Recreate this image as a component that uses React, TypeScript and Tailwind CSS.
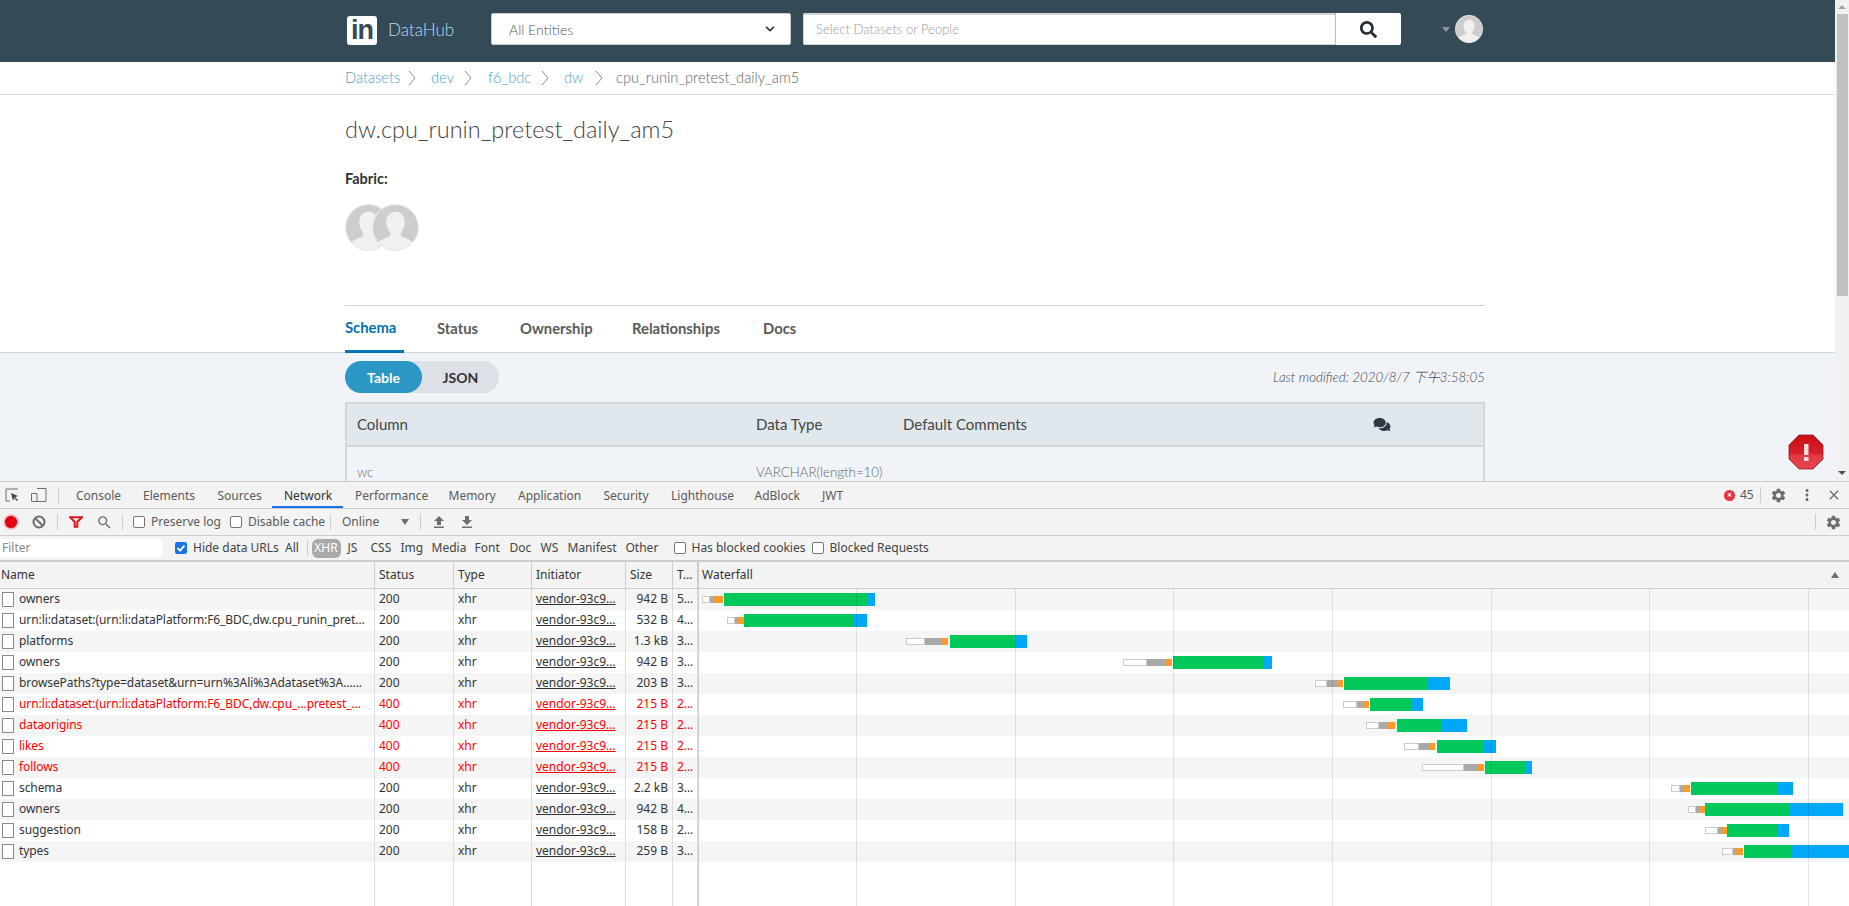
import { FaChevronDown, FaComments, FaSearch } from "react-icons/fa";
import { MdClose, MdMoreVert, MdSearch, MdSettings } from "react-icons/md";

type Req = {
  name: string;
  status: number;
  size: string;
  time: string;
  // page x of: queue start, gray start, orange start, orange end, green start, blue start, blue end
  bars: number[];
};

const WF_LEFT = 699;
const GRID_LINES = [856, 1015, 1173, 1332, 1491, 1649, 1808];

const REQUESTS: Req[] = [
  { name: "owners", status: 200, size: "942 B", time: "5…", bars: [702, 710, 714, 723, 724, 867, 875] },
  { name: "urn:li:dataset:(urn:li:dataPlatform:F6_BDC,dw.cpu_runin_pret…", status: 200, size: "532 B", time: "4…", bars: [727, 735, 738, 744, 744, 854, 867] },
  { name: "platforms", status: 200, size: "1.3 kB", time: "3…", bars: [906, 925, 942, 948, 950, 1016, 1027] },
  { name: "owners", status: 200, size: "942 B", time: "3…", bars: [1123, 1147, 1165, 1172, 1173, 1264, 1272] },
  { name: "browsePaths?type=dataset&urn=urn%3Ali%3Adataset%3A……", status: 200, size: "203 B", time: "3…", bars: [1315, 1327, 1338, 1343, 1344, 1428, 1450] },
  { name: "urn:li:dataset:(urn:li:dataPlatform:F6_BDC,dw.cpu_…pretest_…", status: 400, size: "215 B", time: "2…", bars: [1343, 1357, 1364, 1369, 1370, 1411, 1423] },
  { name: "dataorigins", status: 400, size: "215 B", time: "2…", bars: [1366, 1379, 1388, 1395, 1397, 1441, 1467] },
  { name: "likes", status: 400, size: "215 B", time: "2…", bars: [1404, 1419, 1430, 1435, 1437, 1484, 1496] },
  { name: "follows", status: 400, size: "215 B", time: "2…", bars: [1422, 1464, 1478, 1484, 1485, 1525, 1532] },
  { name: "schema", status: 200, size: "2.2 kB", time: "3…", bars: [1671, 1680, 1684, 1690, 1691, 1777, 1793] },
  { name: "owners", status: 200, size: "942 B", time: "4…", bars: [1688, 1696, 1699, 1705, 1705, 1790, 1843] },
  { name: "suggestion", status: 200, size: "158 B", time: "2…", bars: [1705, 1718, 1721, 1727, 1727, 1777, 1789] },
  { name: "types", status: 200, size: "259 B", time: "3…", bars: [1722, 1733, 1736, 1743, 1744, 1791, 1860] },
];

const COLS = "grid grid-cols-[375px_79px_78px_94px_47px_25px_1fr]";
const CELL = "border-r border-[#dcdcdc] pl-[4px] pr-[4px] overflow-hidden whitespace-nowrap";

function Avatar({ className }: { className?: string }) {
  return (
    <svg viewBox="0 0 48 48" className={className}>
      <defs>
        <clipPath id="avatar-clip">
          <circle cx="24" cy="24" r="23" />
        </clipPath>
      </defs>
      <circle cx="24" cy="24" r="23.5" fill="#fff" stroke="#e6e6e6" />
      <g clipPath="url(#avatar-clip)">
        <rect width="48" height="48" fill="#cdcdcd" />
        <path
          d="M24 8c-6 0-9.500 4.500-9.500 10.500 0 4.500 1.800 8 4 10.500v3.500c-2.500 2-9 3.500-11.500 6-1.500 1.500-1.500 5-1.500 9.500h37c0-4.500 0-8-1.500-9.500-2.500-2.500-9-4-11.500-6V29c2.200-2.500 4-6 4-10.500C33.500 12.500 30 8 24 8z"
          fill="#f0f0f0"
        />
      </g>
    </svg>
  );
}

function Crumb({ children }: { children: React.ReactNode }) {
  return <span className="text-[#4b9fcb]">{children}</span>;
}

function CrumbArrow({ className }: { className: string }) {
  return (
    <svg viewBox="0 0 8 16" className={`h-[16px] w-[8px] shrink-0 ${className}`} fill="none" stroke="#8a8a8a" strokeWidth="1">
      <path d="M1 1l6 7-6 7" />
    </svg>
  );
}

function TopBar() {
  return (
    <header className="flex h-[62px] items-center bg-[#344a57] pl-[347px]">
      <div className="mb-[2px] flex h-[29px] w-[30px] items-end justify-center rounded-[3px] bg-white font-['Liberation_Sans',sans-serif] text-[27px] leading-[29px] font-bold tracking-[-1px] text-[#344a57]">
        in
      </div>
      <span className="mb-[2px] ml-[11px] w-[103px] text-[17px] font-light text-[#b9dcf2]">DataHub</span>
      <div className="mb-[4px] flex h-[32px] w-[300px] items-center justify-between rounded-[2px] border border-[#c9c9c9] bg-white pr-[15px] pl-[17px] text-[14px] font-light text-[#555]">
        All Entities
        <FaChevronDown className="h-[10px] w-[10px] text-[#333]" />
      </div>
      <div className="mb-[4px] ml-[12px] flex h-[32px] w-[532px] items-center rounded-l-[2px] border-t-2 border-b border-l border-[#d4d4d4] bg-white pl-[12px] text-[13px] font-light text-[#9b9b9b]">
        Select Datasets or People
      </div>
      <div className="mb-[4px] flex h-[32px] w-[66px] items-center justify-center rounded-r-[2px] border-l border-[#bdbdbd] bg-white">
        <FaSearch className="h-[17px] w-[17px] text-[#222d35]" />
      </div>
      <span className="mb-[4px] ml-[41px] h-0 w-0 border-x-[4px] border-t-[5px] border-x-transparent border-t-[#8b979e]" />
      <Avatar className="mb-[4px] ml-[5px] h-[28px] w-[28px]" />
    </header>
  );
}

function PageBody() {
  return (
    <main className="relative min-w-0 flex-1 overflow-hidden bg-white font-['Lato','Noto_Sans_CJK_SC',sans-serif]">
      <TopBar />
      <nav className="flex h-[33px] items-center border-b border-[#dcdcdc] pb-[1px] pl-[345px] text-[14.700px] font-light">
        <span className="w-[63px]"><Crumb>Datasets</Crumb></span>
        <CrumbArrow className="mr-[15px]" />
        <span className="w-[33px]"><Crumb>dev</Crumb></span>
        <CrumbArrow className="mr-[16px]" />
        <span className="w-[53px]"><Crumb>f6_bdc</Crumb></span>
        <CrumbArrow className="mr-[15px]" />
        <span className="w-[31px]"><Crumb>dw</Crumb></span>
        <CrumbArrow className="mr-[13px]" />
        <span className="text-[#666]">cpu_runin_pretest_daily_am5</span>
      </nav>

      <div className="ml-[345px] w-[1140px]">
        <h1 className="mt-[20px] h-[29px] text-[23.500px] leading-[29px] font-light text-[#444]">dw.cpu_runin_pretest_daily_am5</h1>
        <div className="mt-[25px] h-[20px] text-[14.500px] leading-[20px] font-bold text-[#333]">Fabric:</div>
        <div className="mt-[15px] flex h-[47px]">
          <Avatar className="h-[47px] w-[47px]" />
          <Avatar className="-ml-[20px] h-[47px] w-[47px]" />
        </div>
        <div className="mt-[54px] flex h-[47px] items-center border-t border-[#d0d0d0] pb-[2px] text-[14.800px] font-bold text-[#5a5a5a]">
          <span className="-mb-[2px] flex h-[48px] w-[59px] items-center border-b-[3px] border-[#0073b1] pb-[1px] text-[#0073b1]">Schema</span>
          <span className="ml-[33px] w-[83px]">Status</span>
          <span className="w-[112px]">Ownership</span>
          <span className="w-[131px]">Relationships</span>
          <span>Docs</span>
        </div>
      </div>

      <section className="h-[200px] border-t border-[#cfd6dc] bg-[#f0f4f8]">
        <div className="ml-[345px] w-[1140px]">
          <div className="flex items-center justify-between pt-[8px]">
            <div className="flex h-[32px] w-[154px] rounded-full bg-[#dde1e7] text-[14px] font-bold">
              <span className="flex w-[77px] items-center justify-center rounded-full bg-[#2a97c5] text-white">Table</span>
              <span className="flex w-[77px] items-center justify-center text-[#333]">JSON</span>
            </div>
            <span className="text-[13.400px] font-light text-[#444] italic">Last modified: 2020/8/7 下午3:58:05</span>
          </div>
          <div className="mt-[9px] border-x-2 border-t-2 border-[#cfd6dc]">
            <div className="flex h-[43px] items-center border-b-2 border-[#cfd6dc] bg-[#e0e8ee] pl-[10px] text-[15px] text-[#444]">
              <span className="w-[399px]">Column</span>
              <span className="w-[147px]">Data Type</span>
              <span className="w-[470px]">Default Comments</span>
              <FaComments className="h-[15px] w-[18px] text-[#2e3a42]" />
            </div>
            <div className="flex h-[60px] pt-[16px] pl-[10px] text-[13.300px] font-light text-[#666]">
              <span className="w-[399px]">wc</span>
              <span>VARCHAR(length=10)</span>
            </div>
          </div>
        </div>
      </section>

      <svg viewBox="0 0 36 36" className="absolute top-[434px] right-[11px] h-[36px] w-[36px]">
        <defs>
          <linearGradient id="sign-red" x1="0" y1="0" x2="0" y2="1">
            <stop offset="0" stopColor="#c90d15" />
            <stop offset="0.55" stopColor="#d9202b" />
            <stop offset="0.6" stopColor="#e23a44" />
            <stop offset="1" stopColor="#e5454e" />
          </linearGradient>
        </defs>
        <path d="M11 1h14l10 10v14L25 35H11L1 25V11z" fill="url(#sign-red)" stroke="#8e1a20" strokeWidth="0.8" />
        <rect x="16" y="10" width="4.500" height="11" fill="#fbdadb" />
        <rect x="16" y="23" width="4.500" height="4" fill="#fbdadb" />
      </svg>
    </main>
  );
}

function PageScrollbar() {
  return (
    <div className="flex w-[14px] flex-col items-center bg-[#f1f1f1]">
      <span className="mt-[5px] h-0 w-0 border-x-[4px] border-b-[4px] border-x-transparent border-b-[#a3a3a3]" />
      <div className="mt-[5px] h-[282px] w-[11px] bg-[#c1c1c1]" />
      <span className="mt-auto mb-[6px] h-0 w-0 border-x-[4px] border-t-[4px] border-x-transparent border-t-[#505050]" />
    </div>
  );
}

function Sep({ className }: { className: string }) {
  return <span className={`h-[16px] w-px shrink-0 bg-[#ccc] ${className}`} />;
}

function Box({ className = "" }: { className?: string }) {
  return <span className={`block h-[12px] w-[12px] shrink-0 rounded-[2px] border border-[#767676] bg-white ${className}`} />;
}

function TabsRow() {
  return (
    <div className="flex h-[27px] items-center border-b border-[#ccc] text-[12px] text-[#5a5a5a]">
      <svg viewBox="0 0 14 14" className="ml-[5px] h-[14px] w-[14px]" fill="none">
        <path d="M13 1H1v12h4" stroke="#6e6e6e" />
        <path d="M6 5l7 3-3 1.200L13 12l-1 1-3-3-1 3z" fill="#444" />
      </svg>
      <svg viewBox="0 0 16 14" className="ml-[12px] h-[14px] w-[16px]" fill="none" stroke="#6e6e6e">
        <path d="M6 .5h9v13H6" />
        <path d="M.5 5.500h5.500v8H.5z" />
      </svg>
      <Sep className="ml-[11px]" />
      <div className="ml-[5px] flex h-full">
        <span className="flex w-[67px] items-center pt-[1px] pl-[12px]">Console</span>
        <span className="flex w-[74.500px] items-center pt-[1px] pl-[12px]">Elements</span>
        <span className="flex w-[66.500px] items-center pt-[1px] pl-[12px]">Sources</span>
        <span className="flex w-[71px] items-center border-b-2 border-[#1a73e8] pt-[3px] pl-[12px] text-[#333]">Network</span>
        <span className="flex w-[93.500px] items-center pt-[1px] pl-[12px]">Performance</span>
        <span className="flex w-[69.500px] items-center pt-[1px] pl-[12px]">Memory</span>
        <span className="flex w-[85.500px] items-center pt-[1px] pl-[12px]">Application</span>
        <span className="flex w-[67.500px] items-center pt-[1px] pl-[12px]">Security</span>
        <span className="flex w-[83.500px] items-center pt-[1px] pl-[12px]">Lighthouse</span>
        <span className="flex w-[67.500px] items-center pt-[1px] pl-[12px]">AdBlock</span>
        <span className="flex items-center pt-[1px] pl-[12px]">JWT</span>
      </div>
      <span className="ml-auto flex h-[11px] w-[11px] items-center justify-center rounded-full bg-[#ea3342] text-[8px] leading-none font-bold text-white">×</span>
      <span className="ml-[5px] w-[20px]">45</span>
      <Sep className="" />
      <MdSettings className="ml-[9px] h-[17px] w-[17px] text-[#6e6e6e]" />
      <MdMoreVert className="ml-[11px] h-[18px] w-[18px] text-[#6e6e6e]" />
      <MdClose className="mr-[7px] ml-[10px] h-[16px] w-[16px] text-[#6e6e6e]" />
    </div>
  );
}

function ToolbarRow() {
  return (
    <div className="flex h-[27px] items-center border-b border-[#ccc] text-[12px] text-[#5a5a5a]">
      <span className="ml-[5px] h-[12px] w-[12px] rounded-full bg-[#e60012] shadow-[0_0_3px_#e60012]" />
      <svg viewBox="0 0 14 14" className="ml-[15px] h-[14px] w-[14px]" fill="none" stroke="#6e6e6e" strokeWidth="2">
        <circle cx="7" cy="7" r="5.500" />
        <path d="M3 3l8 8" />
      </svg>
      <Sep className="ml-[11px]" />
      <svg viewBox="0 0 14 12" className="ml-[11px] h-[12px] w-[14px]" fill="none" stroke="#e2141b" strokeWidth="2">
        <path d="M1 1.200h12L8.300 6v4.800H5.700V6z" />
      </svg>
      <MdSearch className="ml-[13px] h-[17px] w-[17px] text-[#6e6e6e]" />
      <Sep className="ml-[9px]" />
      <Box className="ml-[10px]" />
      <span className="ml-[6px] w-[79px]">Preserve log</span>
      <Box />
      <span className="ml-[6px] w-[82px]">Disable cache</span>
      <Sep className="" />
      <span className="ml-[11px] w-[59px]">Online</span>
      <span className="h-0 w-0 border-x-[4px] border-t-[6px] border-x-transparent border-t-[#6e6e6e]" />
      <Sep className="ml-[11px]" />
      <svg viewBox="0 0 12 12" className="ml-[12px] h-[12px] w-[12px]" fill="#6e6e6e">
        <path d="M6 0l5 5H8v4H4V5H1zM1 10.500h10V12H1z" />
      </svg>
      <svg viewBox="0 0 12 12" className="ml-[16px] h-[12px] w-[12px]" fill="#6e6e6e">
        <path d="M4 0h4v4h3L6 9 1 4h3zM1 10.500h10V12H1z" />
      </svg>
      <Sep className="ml-auto" />
      <MdSettings className="mr-[7px] ml-[9px] h-[17px] w-[17px] text-[#6e6e6e]" />
    </div>
  );
}

function FilterRow() {
  return (
    <div className="flex h-[26px] items-center border-b-2 border-[#ccc] text-[12px] text-[#444]">
      <div className="flex h-[18px] w-[162px] items-center bg-white pl-[2px] text-[#8a8a8a]">Filter</div>
      <span className="ml-[13px] flex h-[12px] w-[12px] items-center justify-center rounded-[2px] bg-[#1a73e8]">
        <svg viewBox="0 0 12 12" className="h-[12px] w-[12px]" fill="none" stroke="#fff" strokeWidth="1.800">
          <path d="M2.500 6.200l2.500 2.500 4.500-5" />
        </svg>
      </span>
      <span className="ml-[6px] w-[92px]">Hide data URLs</span>
      <span className="w-[21.500px]">All</span>
      <Sep className="" />
      <span className="ml-[4px] flex h-[19px] w-[29px] items-center justify-center rounded-[6px] bg-[#a9a9a9] text-white">XHR</span>
      <span className="ml-[7px] w-[23px]">JS</span>
      <span className="w-[30px]">CSS</span>
      <span className="w-[31px]">Img</span>
      <span className="w-[43px]">Media</span>
      <span className="w-[35px]">Font</span>
      <span className="w-[31px]">Doc</span>
      <span className="w-[27px]">WS</span>
      <span className="w-[58px]">Manifest</span>
      <span className="w-[48px]">Other</span>
      <Box />
      <span className="ml-[6px] w-[120px]">Has blocked cookies</span>
      <Box />
      <span className="ml-[6px]">Blocked Requests</span>
    </div>
  );
}

function Bars({ bars }: { bars: number[] }) {
  const [q, g, o, oEnd, gr, b, bEnd] = bars;
  const seg = (from: number, to: number, cls: string) => (
    <span
      className={`absolute ${cls}`}
      style={{ left: from - WF_LEFT, width: to - from }}
    />
  );
  return (
    <>
      {seg(q, g, "top-[7px] h-[7px] border border-[#ccc] bg-white")}
      {seg(g, o, "top-[7px] h-[7px] bg-[#a9a9a9]")}
      {seg(o, oEnd, "top-[7px] h-[7px] bg-[#ff9a29]")}
      {seg(gr, b, "top-[4px] h-[13px] bg-[#00c85b]")}
      {seg(b, bEnd, "top-[4px] h-[13px] bg-[#00a8f7]")}
    </>
  );
}

function RequestRow({ req, index }: { req: Req; index: number }) {
  const failed = req.status >= 400;
  return (
    <div
      className={`${COLS} h-[21px] leading-[20px] ${index % 2 === 0 ? "bg-[#f5f5f5]" : "bg-white"} ${failed ? "text-[#f00]" : "text-[#333]"}`}
    >
      <div className={`${CELL} flex items-center !pl-[2px]`}>
        <span className="h-[15px] w-[12px] shrink-0 border border-[#8a8a8a] bg-white" />
        <span className="mb-[1px] ml-[5px] tracking-[-0.08px]">{req.name}</span>
      </div>
      <div className={CELL}>{req.status}</div>
      <div className={CELL}>xhr</div>
      <div className={`${CELL} underline`}>vendor-93c9…</div>
      <div className={`${CELL} text-right`}>{req.size}</div>
      <div className={CELL}>{req.time}</div>
      <div className="relative overflow-hidden border-l border-[#ccc]">
        <Bars bars={req.bars} />
      </div>
    </div>
  );
}

function NetworkTable() {
  return (
    <div className="flex min-h-0 flex-1 flex-col overflow-hidden bg-white">
      <div className={`${COLS} h-[27px] shrink-0 border-b border-[#ccc] bg-[#f3f3f3] leading-[25px] text-[#333]`}>
        <div className={`${CELL} !border-[#ccc] !pl-[1px]`}>Name</div>
        <div className={`${CELL} !border-[#ccc]`}>Status</div>
        <div className={`${CELL} !border-[#ccc]`}>Type</div>
        <div className={`${CELL} !border-[#ccc]`}>Initiator</div>
        <div className={`${CELL} !border-[#ccc]`}>Size</div>
        <div className={`${CELL} !border-[#ccc]`}>T…</div>
        <div className="flex items-center justify-between border-l border-[#ccc] pr-[10px] pb-[1px] pl-[3px]">
          Waterfall
          <span className="h-0 w-0 border-x-[4px] border-b-[6px] border-x-transparent border-b-[#6e6e6e]" />
        </div>
      </div>
      <div className="relative flex flex-1 flex-col">
        {REQUESTS.map((req, i) => (
          <RequestRow key={i} req={req} index={i} />
        ))}
        <div className={`${COLS} flex-1`}>
          <div className={CELL} />
          <div className={CELL} />
          <div className={CELL} />
          <div className={CELL} />
          <div className={CELL} />
          <div className={CELL} />
          <div className="border-l border-[#ccc]" />
        </div>
        {GRID_LINES.map((x) => (
          <span key={x} className="absolute top-0 bottom-0 w-px bg-black/10" style={{ left: x }} />
        ))}
      </div>
    </div>
  );
}

function DevTools() {
  return (
    <div className="flex min-h-0 flex-1 flex-col border-t border-[#ccc] bg-[#f3f3f3] font-['Noto_Sans',sans-serif] text-[12px]">
      <TabsRow />
      <ToolbarRow />
      <FilterRow />
      <NetworkTable />
    </div>
  );
}

export default function App() {
  return (
    <div className="flex h-[906px] w-full flex-col overflow-hidden">
      <div className="flex h-[481px] shrink-0 overflow-hidden">
        <PageBody />
        <PageScrollbar />
      </div>
      <DevTools />
    </div>
  );
}
